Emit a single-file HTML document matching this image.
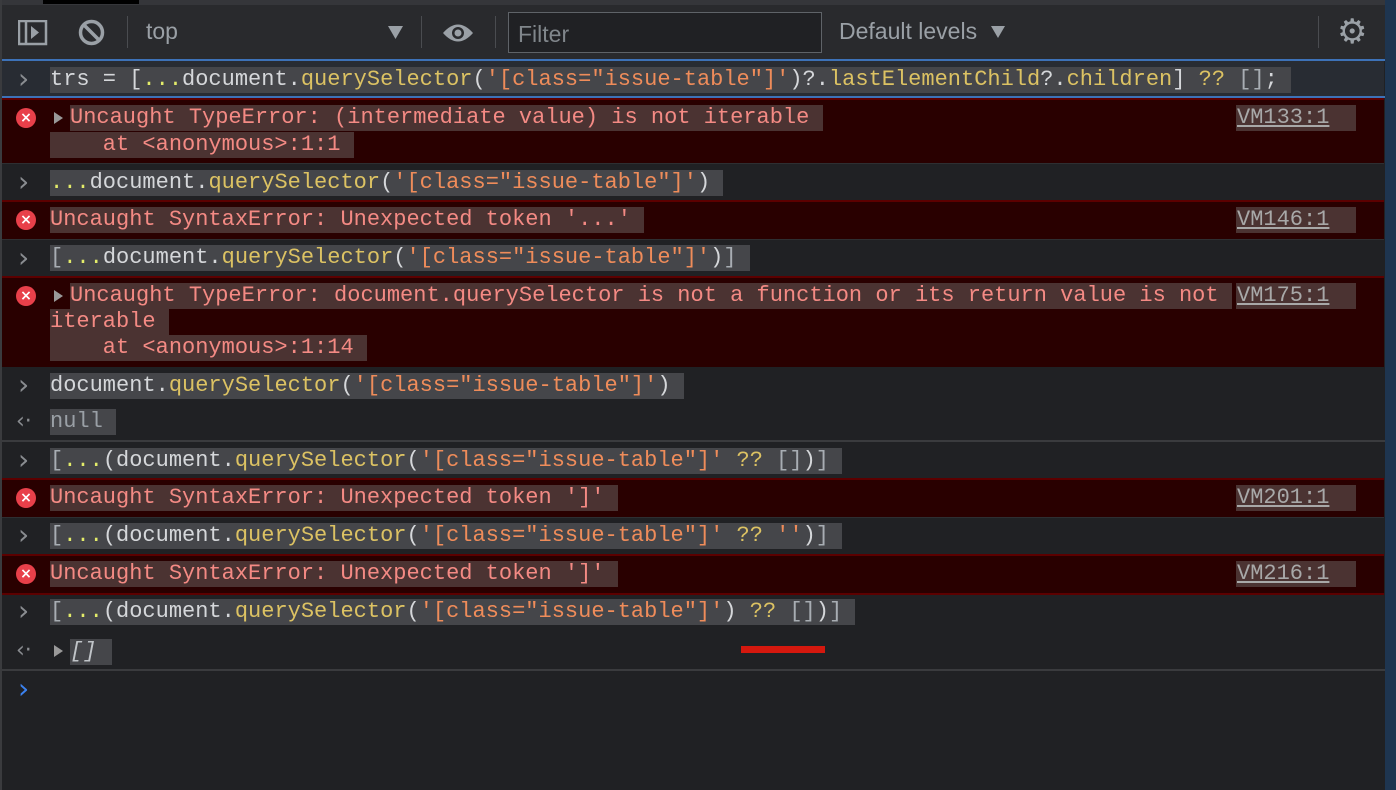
<!DOCTYPE html>
<html><head><meta charset="utf-8"><style>
*{margin:0;padding:0;box-sizing:border-box}
body{width:1396px;height:790px;overflow:hidden;background:#202124;position:relative;font-family:"Liberation Mono",monospace;font-size:22px}
.abs{position:absolute}
.tb{font-family:"Liberation Sans",sans-serif;color:#9aa0a6}
.row{position:absolute;left:2px;width:1382px}
.err{background:#290000;border-top:2px solid #5c0000}
.norm{border-top:1px solid #2e2f32}
.line{position:absolute;left:50px;height:26px;line-height:26px;white-space:pre;color:#d5d7da}
.hl{background:#45464a}
.eh{background:#4b3332;color:#f48a84}
.y{color:#dcc263}.o{color:#ef8c5a}.g{color:#e3ec6a}.p{color:#a8adb3}
.vm{position:absolute;left:1236px;width:120px;height:26px;line-height:26px;background:#4b3332;color:#a8a8a8;text-decoration:underline;padding-left:1px}
.chev{position:absolute;left:18px;color:#8a8d91;font-family:"DejaVu Sans",sans-serif;font-size:28px;line-height:26px}
.x{position:absolute;left:16px;width:20px;height:20px;border-radius:50%;background:#e8404a;color:#fff;font-family:"DejaVu Sans",sans-serif;font-size:14px;font-weight:bold;line-height:20px;text-align:center}
.tri{position:absolute;left:54px;width:0;height:0;border-left:9px solid #999;border-top:6px solid transparent;border-bottom:6px solid transparent}
</style></head><body>
<div class="abs" style="left:0;top:0;width:1396px;height:5px;background:#35363a"></div>
<div class="abs" style="left:43px;top:0;width:96px;height:4px;background:#000"></div>
<div class="abs" style="left:0;top:5px;width:1385px;height:55px;background:#292a2d"></div>
<div class="abs" style="left:1385px;top:0;width:11px;height:790px;background:#1e3550"></div>
<div class="abs" style="left:0;top:0;width:2px;height:790px;background:#3a3b3e"></div>
<svg class="abs" style="left:18px;top:20px" width="30" height="26" viewBox="0 0 30 26"><rect x="1" y="1" width="27" height="23" fill="none" stroke="#9aa0a6" stroke-width="2.5"/><line x1="8" y1="1" x2="8" y2="24" stroke="#9aa0a6" stroke-width="2.5"/><path d="M13 6 L21 12.5 L13 19Z" fill="#9aa0a6"/></svg>
<svg class="abs" style="left:78px;top:19px" width="27" height="27" viewBox="0 0 27 27"><circle cx="13.5" cy="13.5" r="11" fill="none" stroke="#9aa0a6" stroke-width="3.5"/><line x1="6" y1="6" x2="21" y2="21" stroke="#9aa0a6" stroke-width="3.5"/></svg>
<div class="abs" style="left:127px;top:16px;width:1px;height:32px;background:#4a4c50"></div>
<div class="abs tb" style="left:146px;top:18px;font-size:23px">top</div>
<svg class="abs" style="left:388px;top:26px" width="15" height="13"><path d="M0 0H15L7.5 13Z" fill="#9aa0a6"/></svg>
<div class="abs" style="left:421px;top:16px;width:1px;height:32px;background:#4a4c50"></div>
<svg class="abs" style="left:442px;top:22px" width="32" height="22" viewBox="0 0 32 22"><path d="M1 11 Q16 -6 31 11 Q16 28 1 11Z" fill="#9aa0a6"/><circle cx="16" cy="11" r="6" fill="#292a2d"/><circle cx="16" cy="11" r="3.5" fill="#9aa0a6"/></svg>
<div class="abs" style="left:495px;top:16px;width:1px;height:32px;background:#4a4c50"></div>
<div class="abs" style="left:508px;top:12px;width:314px;height:41px;border:1px solid #5f6368;background:#202124"></div>
<div class="abs tb" style="left:518px;top:21px;font-size:23px;color:#80868b">Filter</div>
<div class="abs tb" style="left:839px;top:18px;font-size:23px">Default levels</div>
<svg class="abs" style="left:991px;top:26px" width="14" height="12"><path d="M0 0H14L7 12Z" fill="#9aa0a6"/></svg>
<div class="abs" style="left:1318px;top:16px;width:1px;height:32px;background:#4a4c50"></div>
<div class="abs tb" style="left:1337px;top:12px;font-size:34px;font-family:'DejaVu Sans',sans-serif">⚙</div>
<div class="abs" style="left:2px;top:59px;width:1383px;height:2px;background:#3d72b8"></div>
<div class="row" style="top:61px;height:36px;background:#282c33"></div>
<div class="abs" style="left:2px;top:96px;width:1383px;height:2px;background:#3d72b8"></div>
<div class="chev" style="top:66px">›</div>
<div class="line hl" style="top:67px">trs = [<span class="g">...</span>document.<span class="y">querySelector</span>(<span class="o">'[class="issue-table"]'</span>)?.<span class="y">lastElementChild</span>?.<span class="y">children</span>] <span class="y">??</span> <span class="p">[]</span>; </div>
<div class="row err" style="top:98px;height:65px"></div>
<div class="x" style="top:108px">×</div><div class="tri" style="top:112px"></div>
<div class="line eh" style="top:105px;left:70px">Uncaught TypeError: (intermediate value) is not iterable </div>
<div class="line eh" style="top:132px">    at &lt;anonymous&gt;:1:1 </div>
<div class="vm" style="top:105px">VM133:1</div>
<div class="row norm" style="top:163px;height:38px"></div>
<div class="chev" style="top:169px">›</div>
<div class="line hl" style="top:170px"><span class="g">...</span>document.<span class="y">querySelector</span>(<span class="o">'[class="issue-table"]'</span>) </div>
<div class="row err" style="top:200px;height:39px"></div>
<div class="x" style="top:210px">×</div>
<div class="line eh" style="top:207px">Uncaught SyntaxError: Unexpected token '...' </div>
<div class="vm" style="top:207px">VM146:1</div>
<div class="row norm" style="top:239px;height:38px"></div>
<div class="chev" style="top:245px">›</div>
<div class="line hl" style="top:245px"><span class="p">[</span><span class="g">...</span>document.<span class="y">querySelector</span>(<span class="o">'[class="issue-table"]'</span>)<span class="p">]</span> </div>
<div class="row err" style="top:276px;height:91px"></div>
<div class="x" style="top:286px">×</div><div class="tri" style="top:290px"></div>
<div class="line eh" style="top:283px;left:70px">Uncaught TypeError: document.querySelector is not a function or its return value is not </div>
<div class="line eh" style="top:309px">iterable </div>
<div class="line eh" style="top:335px">    at &lt;anonymous&gt;:1:14 </div>
<div class="vm" style="top:283px">VM175:1</div>
<div class="row norm" style="top:367px;height:74px;border-top:none"></div>
<div class="chev" style="top:372px">›</div>
<div class="line hl" style="top:373px">document.<span class="y">querySelector</span>(<span class="o">'[class="issue-table"]'</span>) </div>
<div class="chev" style="top:409px;left:16px;font-size:22px">‹·</div>
<div class="line hl" style="top:409px;color:#9aa0a6">null </div>
<div class="abs" style="left:2px;top:440px;width:1383px;height:2px;background:#3a3b3e"></div>
<div class="chev" style="top:447px">›</div>
<div class="line hl" style="top:448px"><span class="p">[</span><span class="g">...</span>(document.<span class="y">querySelector</span>(<span class="o">'[class="issue-table"]'</span> <span class="y">??</span> <span class="p">[]</span>)<span class="p">]</span> </div>
<div class="row err" style="top:478px;height:39px"></div>
<div class="x" style="top:488px">×</div>
<div class="line eh" style="top:485px">Uncaught SyntaxError: Unexpected token ']' </div>
<div class="vm" style="top:485px">VM201:1</div>
<div class="row norm" style="top:517px;height:38px"></div>
<div class="chev" style="top:522px">›</div>
<div class="line hl" style="top:523px"><span class="p">[</span><span class="g">...</span>(document.<span class="y">querySelector</span>(<span class="o">'[class="issue-table"]'</span> <span class="y">??</span> <span class="o">''</span>)<span class="p">]</span> </div>
<div class="row err" style="top:554px;height:39px"></div>
<div class="x" style="top:564px">×</div>
<div class="line eh" style="top:561px">Uncaught SyntaxError: Unexpected token ']' </div>
<div class="vm" style="top:561px">VM216:1</div>
<div class="row norm" style="top:593px;height:77px;border-top:2px solid #5c0000"></div>
<div class="chev" style="top:598px">›</div>
<div class="line hl" style="top:599px"><span class="p">[</span><span class="g">...</span>(document.<span class="y">querySelector</span>(<span class="o">'[class="issue-table"]'</span>) <span class="y">??</span> <span class="p">[]</span>)<span class="p">]</span> </div>
<div class="chev" style="top:638px;left:16px;font-size:22px">‹·</div>
<div class="tri" style="top:645px;left:54px"></div>
<div class="line hl" style="top:639px;left:70px;width:42px;font-style:italic;color:#c0c4c8">[]</div>
<div class="abs" style="left:741px;top:646px;width:84px;height:7px;background:#d4180e"></div>
<div class="abs" style="left:2px;top:669px;width:1383px;height:2px;background:#3a3b3e"></div>
<div class="chev" style="top:676px;color:#3b82f0">›</div>
</body></html>
